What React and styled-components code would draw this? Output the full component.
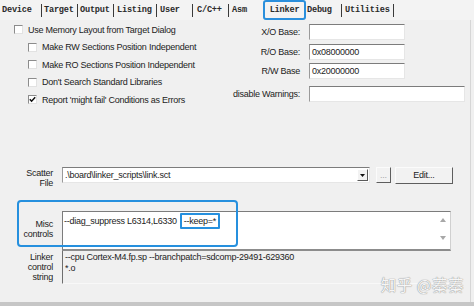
import React from "react";
import styled, { createGlobalStyle } from "styled-components";

const GlobalStyle = createGlobalStyle`
  html, body {
    margin: 0;
    padding: 0;
    background: #f0f0f0;
  }
`;

const tabs = [
  { name: "Device", w: 42, pad: 2 },
  { name: "Target", w: 36, pad: 2 },
  { name: "Output", w: 36, pad: 2 },
  { name: "Listing", w: 43, pad: 3 },
  { name: "User", w: 36, pad: 3 },
  { name: "C/C++", w: 36, pad: 4 },
  { name: "Asm", w: 34, pad: 3, noSep: true },
  { name: "Linker", w: 43, active: true },
  { name: "Debug", w: 36, pad: 1 },
  { name: "Utilities", w: 52, pad: 3 },
];

const checks = [
  { label: "Use Memory Layout from Target Dialog", indent: 14 },
  { label: "Make RW Sections Position Independent", indent: 28 },
  { label: "Make RO Sections Position Independent", indent: 28 },
  { label: "Don't Search Standard Libraries", indent: 28 },
  { label: "Report 'might fail' Conditions as Errors", indent: 28, checked: true },
];

const fields = [
  { label: "X/O Base:", value: "", w: 96, mt: 4 },
  { label: "R/O Base:", value: "0x08000000", w: 96, mt: 4 },
  { label: "R/W Base", value: "0x20000000", w: 96, mt: 3 },
  { label: "disable Warnings:", value: "", w: 156, mt: 7 },
];

const App = () => {
  return (
    <Page>
      <GlobalStyle />
      <TabBar>
        {tabs.map((t) => (
          <Tab key={t.name} $w={t.w} $pad={t.pad} $active={t.active}>
            <span>{t.name}</span>
            {!t.noSep && !t.active && <TabSep />}
          </Tab>
        ))}
      </TabBar>

      <Panel>
        <TopSection>
          <CheckList>
            {checks.map((c) => (
              <CheckRow key={c.label} $indent={c.indent}>
                <CheckBox>
                  {c.checked && (
                    <svg width="7" height="7" viewBox="0 0 7 7">
                      <path d="M0.8 3.2 L2.6 5.2 L6.2 1.2" fill="none" stroke="#111" strokeWidth="1.5" />
                    </svg>
                  )}
                </CheckBox>
                <span>{c.label}</span>
              </CheckRow>
            ))}
          </CheckList>

          <FieldList>
            {fields.map((f) => (
              <FieldRow key={f.label} $mt={f.mt}>
                <FieldLabel>{f.label}</FieldLabel>
                <TextInput $w={f.w}>{f.value}</TextInput>
              </FieldRow>
            ))}
          </FieldList>
        </TopSection>

        <ScatterRow>
          <RowLabel>
            Scatter
            <br />
            File
          </RowLabel>
          <ScatterTools>
            <Combo>
              <ComboText>.\board\linker_scripts\link.sct</ComboText>
              <ComboArrow>
                <svg width="5" height="3" viewBox="0 0 5 3">
                  <path d="M0 0 H5 L2.5 3 Z" fill="#111" />
                </svg>
              </ComboArrow>
            </Combo>
            <Button $w={15} $disabled>...</Button>
            <Button $w={58} $h={17}>Edit...</Button>
          </ScatterTools>
        </ScatterRow>

        <MiscRow>
          <Highlight />
          <RowLabel $center>
            Misc
            <br />
            controls
          </RowLabel>
          <MiscBox>
            <MiscText>
              --diag_suppress L6314,L6330
              <KeepMark>--keep=*</KeepMark>
            </MiscText>
            <ScrollCol>
              <svg width="6" height="4" viewBox="0 0 6 4">
                <path d="M0 4 H6 L3 0 Z" fill="#a8a8a8" />
              </svg>
              <svg width="6" height="4" viewBox="0 0 6 4">
                <path d="M0 0 H6 L3 4 Z" fill="#a8a8a8" />
              </svg>
            </ScrollCol>
          </MiscBox>
        </MiscRow>

        <LinkerRow>
          <RowLabel>
            Linker
            <br />
            control
            <br />
            string
          </RowLabel>
          <LinkerBox>
            --cpu Cortex-M4.fp.sp --branchpatch=sdcomp-29491-629360
            <br />
            *.o
          </LinkerBox>
        </LinkerRow>
      </Panel>
      <BottomBand />
      <Watermark>知乎 @蓁蓁</Watermark>
    </Page>
  );
};

const Page = styled.div`
  position: relative;
  width: 474px;
  height: 306px;
  overflow: hidden;
  background: #f0f0f0;
  display: flex;
  flex-direction: column;
  font-family: "Liberation Sans", Arial, sans-serif;
  font-size: 9px;
  letter-spacing: -0.25px;
  color: #1c1c1c;
`;

const TabBar = styled.div`
  height: 20px;
  display: flex;
  align-items: stretch;
  background: #f3f3f3;
  font-family: "Liberation Mono", "DejaVu Sans Mono", monospace;
  font-weight: bold;
  font-size: 8.6px;
  letter-spacing: -0.2px;
  color: #2a2a2a;
`;

const Tab = styled.div`
  box-sizing: border-box;
  width: ${(p) => p.$w}px;
  padding-left: ${(p) => (p.$active ? 0 : p.$pad)}px;
  display: flex;
  align-items: center;
  justify-content: ${(p) => (p.$active ? "center" : "space-between")};
  border: ${(p) => (p.$active ? "2px solid #2a8fdc" : "none")};
  border-radius: ${(p) => (p.$active ? "3px" : "0")};
  white-space: nowrap;
`;

const TabSep = styled.i`
  width: 1px;
  height: 13px;
  background: #3a3a3a;
`;

const Panel = styled.div`
  flex: 1;
  width: 470px;
  border-right: 1px solid #d6d6d6;
  display: flex;
  flex-direction: column;
`;

const TopSection = styled.div`
  height: 90px;
  display: grid;
  grid-template-columns: 230px 1fr;
`;

const CheckList = styled.div`
  padding-top: 1px;
  display: flex;
  flex-direction: column;
`;

const CheckRow = styled.div`
  height: 17.5px;
  padding-left: ${(p) => p.$indent}px;
  display: flex;
  align-items: center;
  gap: 5px;
  white-space: nowrap;
`;

const CheckBox = styled.span`
  box-sizing: border-box;
  width: 9px;
  height: 9px;
  background: #fff;
  border: 1px solid;
  border-color: #8c8c8c #e2e2e2 #e2e2e2 #8c8c8c;
  display: flex;
  align-items: center;
  justify-content: center;
`;

const FieldList = styled.div`
  display: flex;
  flex-direction: column;
`;

const FieldRow = styled.div`
  margin-top: ${(p) => p.$mt}px;
  height: 16px;
  display: flex;
  align-items: center;
  gap: 9px;
`;

const FieldLabel = styled.span`
  width: 70px;
  text-align: right;
  white-space: nowrap;
`;

const TextInput = styled.div`
  box-sizing: border-box;
  width: ${(p) => p.$w}px;
  height: 16px;
  padding: 0 2px;
  line-height: 14px;
  background: #fff;
  border: 1px solid;
  border-color: #7c7c7c #e6e6e6 #e6e6e6 #9a9a9a;
`;

const LabeledRow = styled.div`
  display: grid;
  grid-template-columns: 53px 1fr;
  column-gap: 9px;
`;

const RowLabel = styled.div`
  text-align: right;
  line-height: 10px;
  padding-top: ${(p) => (p.$center ? 0 : 1)}px;
  align-self: ${(p) => (p.$center ? "center" : "start")};
  margin-top: ${(p) => (p.$center ? -4 : 0)}px;
`;

const ScatterRow = styled(LabeledRow)`
  margin-top: 57px;
`;

const ScatterTools = styled.div`
  display: flex;
  align-items: flex-start;
`;

const Combo = styled.div`
  box-sizing: border-box;
  width: 308px;
  height: 16px;
  display: flex;
  align-items: center;
  background: #fff;
  border: 1px solid;
  border-color: #7c7c7c #e6e6e6 #e6e6e6 #9a9a9a;
`;

const ComboText = styled.span`
  flex: 1;
  padding-left: 2px;
`;

const ComboArrow = styled.span`
  box-sizing: border-box;
  width: 11px;
  height: 12px;
  margin-right: 1px;
  display: flex;
  align-items: center;
  justify-content: center;
  background: #f2f2f2;
  border: 1px solid;
  border-color: #fff #5a5a5a #5a5a5a #fff;
`;

const Button = styled.div`
  box-sizing: border-box;
  width: ${(p) => p.$w}px;
  height: ${(p) => p.$h || 16}px;
  margin-left: ${(p) => (p.$disabled ? 6 : 4)}px;
  display: flex;
  align-items: center;
  justify-content: center;
  background: #f2f2f2;
  color: ${(p) => (p.$disabled ? "#a6a6a6" : "#1c1c1c")};
  border: 1px solid;
  border-color: #fbfbfb #5e5e5e #5e5e5e #fbfbfb;
  line-height: 1;
`;

const MiscRow = styled(LabeledRow)`
  position: relative;
  margin-top: 23px;
`;

const Highlight = styled.div`
  position: absolute;
  left: 17px;
  top: -11px;
  width: 221px;
  height: 47px;
  box-sizing: border-box;
  border: 2.5px solid #2690de;
  border-radius: 4px;
  pointer-events: none;
`;

const MiscBox = styled.div`
  box-sizing: border-box;
  width: 389px;
  height: 40px;
  display: flex;
  background: #fff;
  border-top: 1px solid #7c7c7c;
  border-left: 1px solid #7c7c7c;
  border-right: 1px solid #d0d0d0;
  border-bottom: 2px solid #8c8c8c;
`;

const MiscText = styled.div`
  flex: 1;
  height: 16px;
  padding: 1px 1px 0;
  display: flex;
  align-items: center;
  white-space: pre;
`;

const KeepMark = styled.span`
  box-sizing: border-box;
  height: 16px;
  margin-left: 3px;
  padding: 0 2px;
  display: flex;
  align-items: center;
  border: 2px solid #2690de;
  border-radius: 1px;
`;

const ScrollCol = styled.div`
  width: 14px;
  padding: 6px 0 9px;
  display: flex;
  flex-direction: column;
  justify-content: space-between;
  align-items: center;
`;

const LinkerRow = styled(LabeledRow)``;

const LinkerBox = styled.div`
  box-sizing: border-box;
  width: 389px;
  height: 33px;
  padding: 1px 2px;
  line-height: 10.5px;
  border-left: 1px solid #6e6e6e;
  border-bottom: 1px solid #f8f8f8;
  white-space: nowrap;
`;

const BottomBand = styled.div`
  height: 4px;
  background: #c6c6c6;
`;

const Watermark = styled.div`
  position: absolute;
  right: 10px;
  bottom: 11px;
  font-family: "Noto Sans CJK SC", sans-serif;
  font-size: 15.5px;
  letter-spacing: 0.5px;
  color: #f6f6f6;
  text-shadow: 0 0 1px #8a8a8a, 0 0 1px #a0a0a0;
  pointer-events: none;
`;

export default App;
